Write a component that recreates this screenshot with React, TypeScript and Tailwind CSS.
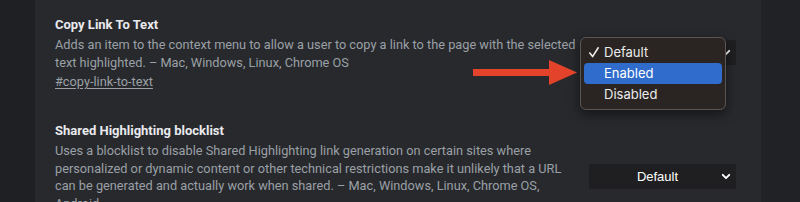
import { ChevronDown } from "lucide-react";

function FlagSelect() {
  return (
    <div className="relative flex h-[25px] w-[147px] shrink-0 items-center bg-[#1f1f21] text-white">
      <span className="flex-1 pl-[8px] text-center font-['Liberation_Sans',Arial,sans-serif] text-[13px]">Default</span>
      <ChevronDown size={13} strokeWidth={3.5} className="mr-[2px] w-[16px] text-white" />
    </div>
  );
}

export default function App() {
  return (
    <div className="flex h-[202px] w-[800px] overflow-hidden bg-[#202124] font-['Roboto',sans-serif]">
      <div className="w-[35px] shrink-0 bg-[#1f2023]" />

      <main className="w-[726px] shrink-0 bg-[#28292d] pl-[20px] pr-[25px] pt-[16px]">
        {/* Copy Link To Text */}
        <section className="relative flex items-start justify-between">
          <div className="w-[528px]">
            <h3 className="text-[13px] font-bold leading-[18px] text-[#e8eaed]">Copy Link To Text</h3>
            <p className="mt-[2px] text-[12.75px] leading-[18px] text-[#9aa0a6]">
              Adds an item to the context menu to allow a user to copy a link to the page with the selected text highlighted. – Mac, Windows, Linux, Chrome OS
            </p>
            <a className="mt-[1px] block text-[12.75px] leading-[18px] text-[#9aa0a6] underline underline-offset-2">#copy-link-to-text</a>
          </div>

          <div className="relative mt-[24px]">
            <FlagSelect />

            {/* open popup */}
            <div className="absolute left-[-9px] top-[-3px] w-[146px] rounded-[6px] border border-[#5b5654] bg-[#2a2523] px-[3px] py-[4px] font-['Inter',sans-serif] text-[13px] text-[#ececec] shadow-[0_4px_12px_rgba(0,0,0,0.5)]">
              <div className="flex h-[21px] items-center pl-[5px]">
                <svg className="mr-[5px]" width="10" height="11" viewBox="0 0 10 11">
                  <polyline points="0.8,6 3.6,9.6 9.2,0.8" fill="none" stroke="#ececec" strokeWidth="1.6" strokeLinecap="round" strokeLinejoin="round" />
                </svg>
                <span>Default</span>
              </div>
              <div className="flex h-[21px] items-center rounded-[4px] bg-[#2f6ccb] pl-[20px] text-white">Enabled</div>
              <div className="flex h-[21px] items-center pl-[20px]">Disabled</div>
            </div>
          </div>

          {/* red arrow */}
          <svg className="absolute left-[418px] top-[44px]" width="106" height="26" viewBox="0 0 106 26">
            <rect x="0" y="9" width="80" height="7" fill="#e2432a" />
            <polygon points="76,0 104,12.5 76,25" fill="#e2432a" />
          </svg>
        </section>

        {/* Shared Highlighting blocklist */}
        <section className="mt-[31px] flex items-start justify-between">
          <div className="w-[528px]">
            <h3 className="text-[13px] font-bold leading-[18px] text-[#e8eaed]">Shared Highlighting blocklist</h3>
            <p className="mt-[2px] text-[12.75px] leading-[17.7px] text-[#9aa0a6]">
              Uses a blocklist to disable Shared Highlighting link generation on certain sites where personalized or dynamic content or other technical restrictions make it unlikely that a URL can be generated and actually work when shared. – Mac, Windows, Linux, Chrome OS, Android
            </p>
          </div>
          <div className="mt-[42px]">
            <FlagSelect />
          </div>
        </section>
      </main>

      <div className="flex-1 bg-[#212225]" />
    </div>
  );
}
